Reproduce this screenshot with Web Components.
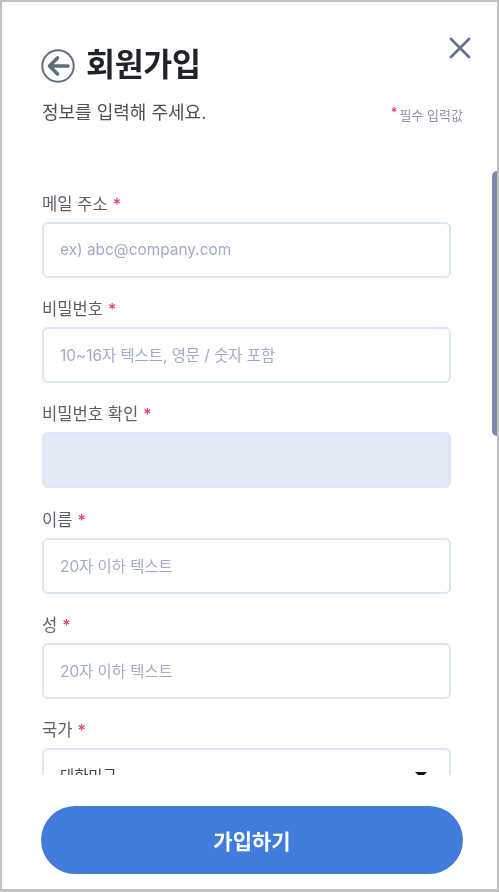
<!DOCTYPE html>
<html lang="ko">
<head>
<meta charset="utf-8">
<title>회원가입</title>
<style>
  html, body { margin: 0; padding: 0; background: #fff; }
  body { font-family: Inter, "Noto Sans CJK KR", sans-serif; }
</style>
</head>
<body>
<signup-dialog>
  <span slot="title">회원가입</span>
  <span slot="subtitle">정보를 입력해 주세요.</span>
  <form-field label="메일 주소" hint="ex) abc@company.com"></form-field>
  <form-field label="비밀번호" hint="10~16자 텍스트, 영문 / 숫자 포함"></form-field>
  <form-field label="비밀번호 확인" disabled></form-field>
  <form-field label="이름" hint="20자 이하 텍스트"></form-field>
  <form-field label="성" hint="20자 이하 텍스트"></form-field>
  <form-field label="국가" value="대한민국" select></form-field>
  <span slot="action">가입하기</span>
</signup-dialog>

<script>
/* Form field: label + input box */
class FormField extends HTMLElement {
  connectedCallback() {
    const label = this.getAttribute("label");
    const text = this.getAttribute("hint") || this.getAttribute("value") || "";
    const arrow = this.hasAttribute("select") ? `<i class="arrow"></i>` : "";
    this.attachShadow({ mode: "open" }).innerHTML = `
<style>
  :host { display: block; height: 105.2px; }
  .label {
    display: flex;
    gap: 5px;
    height: 33px;
    padding-top: 3px;
    box-sizing: border-box;
    font-size: 16.6px;
    line-height: 24px;
    color: #5a5f69;
  }
  .req { color: #f0386b; font-size: 16px; font-weight: 500; line-height: 24px; }
  .box {
    display: flex;
    align-items: center;
    justify-content: space-between;
    box-sizing: border-box;
    width: 409px;
    height: 56px;
    padding: 0 20px 2px 16px;
    background: #fff;
    border: 2px solid #dce6f6;
    border-radius: 6px;
    font-size: 15.4px;
    color: #a0abc6;
  }
  :host([disabled]) .box { background: #e3e9f4; }
  :host([select]) .box { color: #444; }
  .arrow {
    width: 0;
    height: 0;
    border: 6px solid transparent;
    border-top-color: #111;
    border-bottom: 0;
    margin-right: 2px;
  }
</style>
<span class="label"><span>${label}</span><span class="req">*</span></span>
<div class="box"><span>${text}</span>${arrow}</div>
`;
  }
}
customElements.define("form-field", FormField);

const dialogTemplate = document.createElement("template");
dialogTemplate.innerHTML = `
<style>
  :host {
    display: flex;
    flex-direction: column;
    position: relative;
    box-sizing: border-box;
    width: 499px;
    height: 892px;
    border: 2px solid #c2c2c2;
    border-bottom-width: 3px;
    background: #fff;
    overflow: hidden;
    filter: blur(.35px);
  }
  header { flex: none; height: 148px; padding: 0 34px 0 39px; box-sizing: border-box; position: relative; }
  .top { display: flex; align-items: center; padding-top: 40px; height: 46px; }
  .back { width: 34px; height: 34px; margin: 2px 11px 0 0; flex: none; }
  .title { font-size: 31.5px; font-weight: 700; line-height: 46px; color: #20232b; letter-spacing: -.3px; }
  .close { position: absolute; right: 24px; top: 33px; width: 26px; height: 26px; }
  .sub { display: flex; justify-content: space-between; align-items: center; margin-top: 6px; height: 34px; padding-left: 1px; }
  .subtitle { font-size: 18px; color: #4a4f5a; }
  .must { display: flex; gap: 2px; font-size: 13px; color: #8b94aa; padding-top: 6px; }
  .must b { color: #f0386b; font-weight: 500; margin-top: -1px; }
  .scroll { flex: 1; min-height: 0; overflow: hidden; padding: 39px 0 0 40px; }
  .thumb {
    position: absolute;
    right: 0;
    top: 169px;
    width: 5px;
    height: 265px;
    background: #7c89ad;
    border-radius: 5px 0 0 5px;
  }
  footer { flex: none; height: 114px; padding: 31px 0 0 39px; box-sizing: border-box; }
  button {
    display: block;
    width: 422px;
    height: 68px;
    border: 0;
    border-radius: 34px;
    background: #3f7cdb;
    color: #fff;
    font: 700 21px Inter, "Noto Sans CJK KR", sans-serif;
  }
</style>
<header>
  <div class="top">
    <svg class="back" viewBox="0 0 34 34" fill="none" stroke="#5f6b7e">
      <circle cx="17" cy="17" r="15.7" stroke-width="2"/>
      <path d="M27 17H9M16.5 9L8.5 17L16.5 25" stroke-width="3.6" stroke-linecap="round" stroke-linejoin="round"/>
    </svg>
    <span class="title"><slot name="title"></slot></span>
    <svg class="close" viewBox="0 0 26 26" fill="none" stroke="#66728f" stroke-width="2.8" stroke-linecap="round">
      <path d="M4 4L22 22M22 4L4 22"/>
    </svg>
  </div>
  <div class="sub">
    <span class="subtitle"><slot name="subtitle"></slot></span>
    <span class="must"><b>*</b> 필수 입력값</span>
  </div>
</header>
<div class="scroll"><slot></slot></div>
<div class="thumb"></div>
<footer><button><slot name="action"></slot></button></footer>
`;
class SignupDialog extends HTMLElement {
  constructor() {
    super();
    this.attachShadow({ mode: "open" }).append(dialogTemplate.content.cloneNode(true));
  }
}
customElements.define("signup-dialog", SignupDialog);
</script>
</body>
</html>
